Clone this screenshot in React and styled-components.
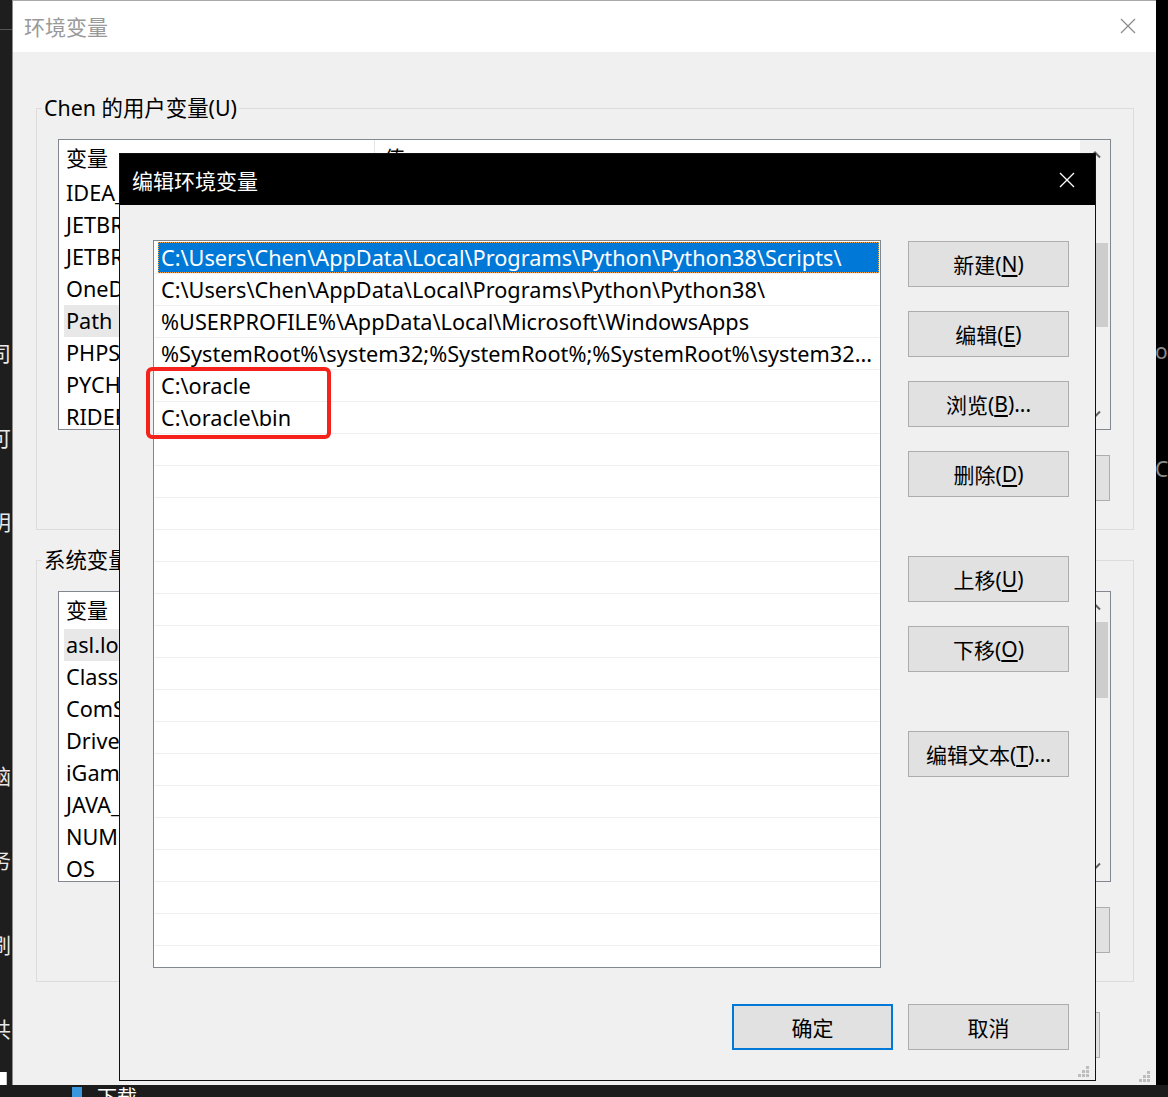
import React from "react";
import styled, { createGlobalStyle, css } from "styled-components";

const font = `"Noto Sans", "Noto Sans CJK SC", sans-serif`;

const GlobalStyle = createGlobalStyle`
  html, body {
    margin: 0;
    padding: 0;
    background: #1e1e1e;
  }
  body {
    font-family: ${font};
    font-size: 21px;
    color: #000;
  }
  * {
    box-sizing: border-box;
  }
`;

// value column sits under the dialog, so only the names are drawn
const userVars = [
  "IDEA_INITIAL_DIRECTORY",
  "JETBRAINS_CLIENT_VM_OPTIONS",
  "JETBRAINSCLIENT_VM_OPTIONS",
  "OneDrive",
  "Path",
  "PHPSTORM_VM_OPTIONS",
  "PYCHARM_VM_OPTIONS",
  "RIDER_VM_OPTIONS"
];

const systemVars = [
  "asl.log",
  "ClassPath",
  "ComSpec",
  "DriverData",
  "iGameCenter",
  "JAVA_HOME",
  "NUMBER_OF_PROCESSORS",
  "OS"
];

const pathEntries = [
  "C:\\Users\\Chen\\AppData\\Local\\Programs\\Python\\Python38\\Scripts\\",
  "C:\\Users\\Chen\\AppData\\Local\\Programs\\Python\\Python38\\",
  "%USERPROFILE%\\AppData\\Local\\Microsoft\\WindowsApps",
  "%SystemRoot%\\system32;%SystemRoot%;%SystemRoot%\\system32...",
  "C:\\oracle",
  "C:\\oracle\\bin"
];

const emptyRows = 23 - pathEntries.length;

const leftGlyphs = ["司", "可", "明", "", "", "脑", "务", "刷", "共"];

function CloseIcon({ color }) {
  return (
    <svg width="16" height="16" viewBox="0 0 16 16">
      <path d="M1 1 L15 15 M15 1 L1 15" stroke={color} strokeWidth="1.3" />
    </svg>
  );
}

function Chevron({ down }) {
  return (
    <svg width="12" height="8" viewBox="0 0 12 8">
      <path
        d={down ? "M1 1.5 L6 6.5 L11 1.5" : "M1 6.5 L6 1.5 L11 6.5"}
        stroke="#606060"
        strokeWidth="2"
        fill="none"
      />
    </svg>
  );
}

function Grip() {
  return (
    <svg width="12" height="12" viewBox="0 0 12 12" fill="#bdbdbd">
      <rect x="8" y="0" width="3" height="3" />
      <rect x="4" y="4" width="3" height="3" />
      <rect x="8" y="4" width="3" height="3" />
      <rect x="0" y="8" width="3" height="3" />
      <rect x="4" y="8" width="3" height="3" />
      <rect x="8" y="8" width="3" height="3" />
    </svg>
  );
}

function Label({ text, mnemonic, suffix = "" }) {
  return (
    <>
      {text}(<u>{mnemonic}</u>){suffix}
    </>
  );
}

function VarList({ rows, selected, thumbTop, thumbHeight }) {
  return (
    <ListFrame>
      <ListMain>
        <HeaderRow>
          <HeaderCell>变量</HeaderCell>
          <HeaderCell $value>值</HeaderCell>
        </HeaderRow>
        {rows.map(name => (
          <VarRow key={name} $selected={name === selected}>
            <NameCell>{name}</NameCell>
          </VarRow>
        ))}
      </ListMain>
      <ScrollBar>
        <ArrowBox>
          <Chevron />
        </ArrowBox>
        <Track>
          <Thumb $top={thumbTop} $height={thumbHeight} />
        </Track>
        <ArrowBox>
          <Chevron down />
        </ArrowBox>
      </ScrollBar>
    </ListFrame>
  );
}

export default function App() {
  return (
    <Screen>
      <GlobalStyle />
      <Desk>
        <LeftStrip>
          <StripBar />
          <StripGlyphs>
            {leftGlyphs.map((g, i) => (
              <StripGlyph key={i}>{g}</StripGlyph>
            ))}
          </StripGlyphs>
          <StripBox />
        </LeftStrip>

        <Window>
          <TitleBar>
            <WindowTitle>环境变量</WindowTitle>
            <CloseIcon color="#8c8c8c" />
          </TitleBar>
          <WindowBody>
            <Group>
              <Legend>Chen 的用户变量(U)</Legend>
              <GroupBody>
                <VarList rows={userVars} selected="Path" thumbTop={73} thumbHeight={84} />
                <ButtonRow>
                  <Button>新建(N)...</Button>
                  <Button>编辑(E)...</Button>
                  <Button>删除(D)</Button>
                </ButtonRow>
              </GroupBody>
            </Group>
            <Group $spaced>
              <Legend>系统变量(S)</Legend>
              <GroupBody>
                <VarList rows={systemVars} selected="asl.log" thumbTop={0} thumbHeight={76} />
                <ButtonRow>
                  <Button>新建(W)...</Button>
                  <Button>编辑(I)...</Button>
                  <Button>删除(L)</Button>
                </ButtonRow>
              </GroupBody>
            </Group>
            <WindowFooter>
              <Button>确定</Button>
              <Button>取消</Button>
            </WindowFooter>
          </WindowBody>
          <GripSpot>
            <Grip />
          </GripSpot>
        </Window>

        <RightStrip>
          <RightGlyph>oc</RightGlyph>
          <RightGlyph $second>C</RightGlyph>
        </RightStrip>
      </Desk>

      <Taskbar>
        <TaskIcon />
        <TaskLabel>下载</TaskLabel>
      </Taskbar>

      <Dialog>
        <DialogTitle>
          <span>编辑环境变量</span>
          <CloseIcon color="#ffffff" />
        </DialogTitle>
        <DialogBody>
          <EntryWrap>
            <EntryList>
              {pathEntries.map((entry, idx) => (
                <EntryRow key={entry}>
                  <EntryText $selected={idx === 0}>{entry}</EntryText>
                </EntryRow>
              ))}
              {Array.from({ length: emptyRows }).map((_, idx) => (
                <EntryRow key={"empty" + idx} />
              ))}
            </EntryList>
            <Highlight />
          </EntryWrap>
          <ButtonColumn>
            <Button>
              <Label text="新建" mnemonic="N" />
            </Button>
            <Button $gap={24}>
              <Label text="编辑" mnemonic="E" />
            </Button>
            <Button $gap={24}>
              <Label text="浏览" mnemonic="B" suffix="..." />
            </Button>
            <Button $gap={24}>
              <Label text="删除" mnemonic="D" />
            </Button>
            <Button $gap={59}>
              <Label text="上移" mnemonic="U" />
            </Button>
            <Button $gap={24}>
              <Label text="下移" mnemonic="O" />
            </Button>
            <Button $gap={59}>
              <Label text="编辑文本" mnemonic="T" suffix="..." />
            </Button>
          </ButtonColumn>
        </DialogBody>
        <DialogFooter>
          <Button $primary>确定</Button>
          <Button>取消</Button>
        </DialogFooter>
        <GripSpot>
          <Grip />
        </GripSpot>
      </Dialog>
    </Screen>
  );
}

const Screen = styled.div`
  position: relative;
  width: 1168px;
  height: 1097px;
  overflow: hidden;
  display: flex;
  flex-direction: column;
  background: #1e1e1e;
`;

const Desk = styled.div`
  display: flex;
  height: 1085px;
`;

const LeftStrip = styled.div`
  width: 12px;
  background: #1e1e1e;
  display: flex;
  flex-direction: column;
  overflow: hidden;
`;

const StripBar = styled.div`
  margin-top: 29px;
  height: 3px;
  background: #555;
`;

const StripGlyphs = styled.div`
  margin-top: 281px;
  display: flex;
  flex-direction: column;
`;

const StripGlyph = styled.div`
  height: 84.5px;
  line-height: 84.5px;
  margin-left: -10px;
  font-size: 21px;
  color: #e8e8e8;
  white-space: nowrap;
`;

const StripBox = styled.div`
  margin-top: auto;
  width: 7px;
  height: 32px;
  background: #fff;
  border-right: 1px solid #c8c8c8;
`;

const RightStrip = styled.div`
  width: 12px;
  background: #000;
  overflow: hidden;
  padding-top: 331px;
  display: flex;
  flex-direction: column;
`;

const RightGlyph = styled.div`
  font-size: 21px;
  line-height: 40px;
  color: #8a8a8a;
  white-space: nowrap;
  margin-left: -1px;
  ${p =>
    p.$second &&
    css`
      margin-top: 78px;
    `}
`;

const Window = styled.div`
  position: relative;
  width: 1144px;
  background: #f0f0f0;
  border-top: 1px solid #a8a8a8;
  border-left: 1px solid #8c8c8c;
  display: flex;
  flex-direction: column;
`;

const TitleBar = styled.div`
  height: 51px;
  background: #fff;
  display: flex;
  align-items: center;
  justify-content: space-between;
  padding: 0 20px 2px 11px;
`;

const WindowTitle = styled.div`
  font-size: 21px;
  color: #999;
`;

const WindowBody = styled.div`
  flex: 1;
  padding: 42px 22px 0 23px;
  display: flex;
  flex-direction: column;
`;

const Group = styled.fieldset`
  margin: 0;
  padding: 0;
  min-width: 0;
  border: 1px solid #dcdcdc;
  ${p =>
    p.$spaced &&
    css`
      margin-top: 16px;
    `}
`;

const Legend = styled.legend`
  margin-left: 5px;
  padding: 0 2px;
  font-size: 21.4px;
  line-height: 28px;
  color: #000;
`;

const GroupBody = styled.div`
  padding: 17px 22px 28px 21px;
`;

const ListFrame = styled.div`
  height: 291px;
  border: 1px solid #828790;
  background: #fff;
  display: flex;
`;

const ListMain = styled.div`
  flex: 1;
  overflow: hidden;
`;

const HeaderRow = styled.div`
  height: 37px;
  display: flex;
`;

const HeaderCell = styled.div`
  width: 316px;
  padding-left: 7px;
  border-right: 1px solid #e5e5e5;
  line-height: 37px;
  white-space: nowrap;
  ${p =>
    p.$value &&
    css`
      flex: 1;
      border-right: none;
      padding-left: 9px;
    `}
`;

const VarRow = styled.div`
  height: 32px;
  display: flex;
  margin-left: 5px;
  line-height: 32px;
  font-size: 21.7px;
  white-space: nowrap;
  background: ${p => (p.$selected ? "#e8e8e8" : "transparent")};
`;

const NameCell = styled.div`
  width: 311px;
  padding-left: 2px;
  overflow: hidden;
`;

const ScrollBar = styled.div`
  width: 30px;
  background: #f0f0f0;
  display: flex;
  flex-direction: column;
`;

const ArrowBox = styled.div`
  height: 30px;
  display: flex;
  align-items: center;
  justify-content: center;
`;

const Track = styled.div`
  flex: 1;
`;

const Thumb = styled.div`
  margin: ${p => p.$top}px 2px 0;
  height: ${p => p.$height}px;
  background: #cdcdcd;
`;

const ButtonRow = styled.div`
  margin-top: 25px;
  display: flex;
  justify-content: flex-end;
  gap: 14px;
  padding-right: 1px;
`;

const WindowFooter = styled.div`
  margin-top: 30px;
  display: flex;
  justify-content: flex-end;
  gap: 15px;
  padding-right: 34px;
`;

const Button = styled.div`
  width: 161px;
  height: 46px;
  flex-shrink: 0;
  background: #e1e1e1;
  border: 1px solid #adadad;
  display: flex;
  align-items: center;
  justify-content: center;
  font-size: 21px;
  white-space: nowrap;
  color: #000;
  margin-top: ${p => p.$gap || 0}px;
  & u {
    text-underline-offset: 3px;
  }
  ${p =>
    p.$primary &&
    css`
      border: 2px solid #0078d7;
    `}
`;

const GripSpot = styled.div`
  position: absolute;
  right: 5px;
  bottom: 2px;
  display: flex;
`;

const Taskbar = styled.div`
  height: 12px;
  background: #1c1c1c;
  display: flex;
  overflow: hidden;
`;

const TaskIcon = styled.div`
  margin: 2px 0 0 72px;
  width: 10px;
  background: #3a96dd;
`;

const TaskLabel = styled.div`
  margin-left: 15px;
  padding-top: 3px;
  font-size: 20px;
  line-height: 20px;
  color: #fff;
`;

const Dialog = styled.div`
  position: absolute;
  left: 119px;
  top: 153px;
  width: 977px;
  height: 928px;
  border: 1px solid #111;
  background: #f0f0f0;
  display: flex;
  flex-direction: column;
`;

const DialogTitle = styled.div`
  height: 51px;
  background: #000;
  color: #fff;
  font-size: 21px;
  display: flex;
  align-items: center;
  justify-content: space-between;
  padding: 0 20px 0 12px;
`;

const DialogBody = styled.div`
  display: flex;
  gap: 27px;
  padding: 35px 26px 0 33px;
`;

const EntryWrap = styled.div`
  position: relative;
  width: 728px;
  height: 728px;
`;

const EntryList = styled.div`
  height: 100%;
  border: 1px solid #828790;
  background: #fff;
  padding-top: 1px;
  overflow: hidden;
`;

const EntryRow = styled.div`
  height: 32px;
  margin-right: 1px;
  border-bottom: 1px solid #efefef;
  display: flex;
`;

const EntryText = styled.div`
  flex: 1;
  margin-left: 4px;
  padding-left: 3px;
  line-height: 31px;
  font-size: 21.7px;
  white-space: nowrap;
  overflow: hidden;
  color: #000;
  ${p =>
    p.$selected &&
    css`
      background: #0078d7;
      color: #fff;
      outline: 1px dotted #f5a24a;
      outline-offset: -1px;
    `}
`;

const Highlight = styled.div`
  position: absolute;
  left: -7px;
  top: 127px;
  width: 185px;
  height: 72px;
  border: 4px solid #f5221b;
  border-radius: 6px;
  pointer-events: none;
`;

const ButtonColumn = styled.div`
  width: 161px;
  padding-top: 1px;
  display: flex;
  flex-direction: column;
`;

const DialogFooter = styled.div`
  margin-top: 36px;
  display: flex;
  justify-content: flex-end;
  gap: 15px;
  padding-right: 26px;
`;
